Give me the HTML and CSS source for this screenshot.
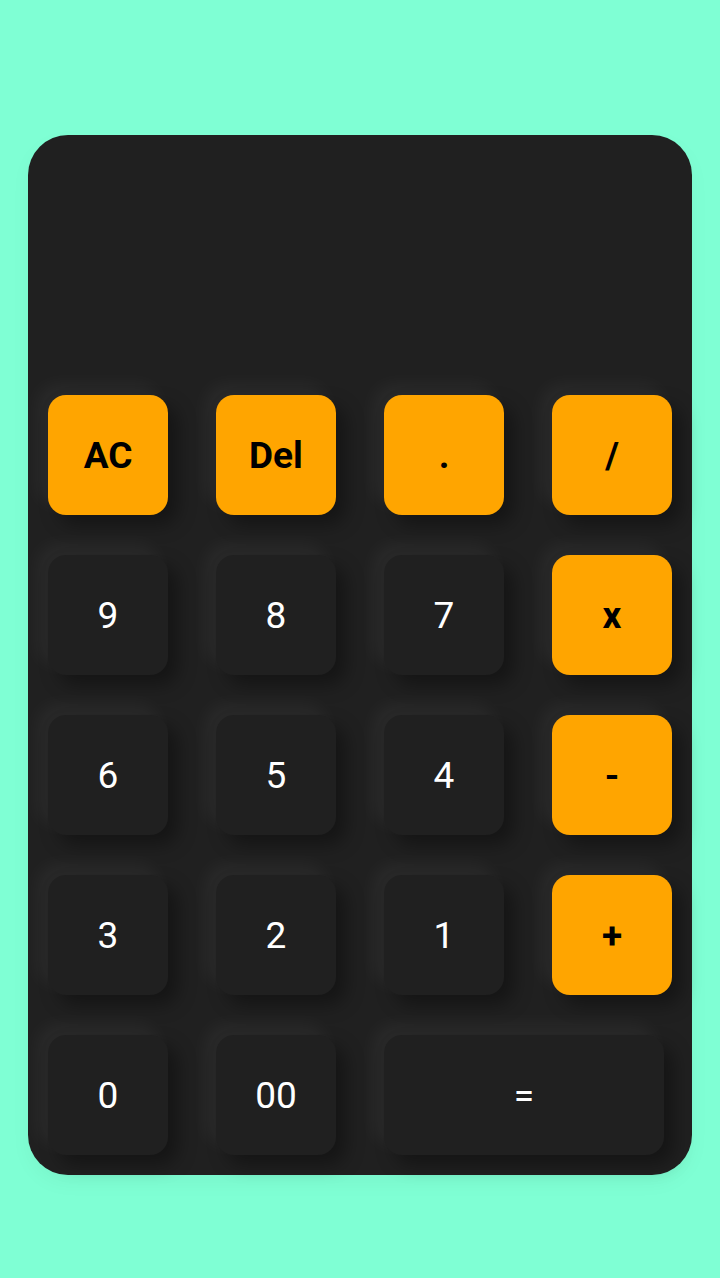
FILE: index.html
```html
<!DOCTYPE html>
<html lang="en">
<head>
  <meta charset="UTF-8" />
  <meta name="viewport" content="width=device-width, initial-scale=1.0" />
  <title>Calculator</title>
  <link rel="stylesheet" href="styles.css">
</head>
<body>
  <div class="calculator">
    <input type="text" class="display" id="display" readonly />
    <div class="keys">
      <button class="op">AC</button>
      <button class="op">Del</button>
      <button class="op">.</button>
      <button class="op">/</button>
      <button>9</button>
      <button>8</button>
      <button>7</button>
      <button class="op">x</button>
      <button>6</button>
      <button>5</button>
      <button>4</button>
      <button class="op">-</button>
      <button>3</button>
      <button>2</button>
      <button>1</button>
      <button class="op">+</button>
      <button>0</button>
      <button>00</button>
      <button class="equal">=</button>
    </div>
  </div>
</body>
</html>
```

FILE: styles.css
```css
* {
  box-sizing: border-box;
}
body {
  margin: 0;
  background-color: #7fffd4;
  font-family: Roboto, "Noto Sans", sans-serif;
  padding: 135px 28px;
}
.calculator {
  background-color: #202020;
  border-radius: 40px;
  padding: 20px;
  box-shadow: 0 8px 20px rgba(0, 0, 0, 0.04);
}
.display {
  display: block;
  width: 100%;
  height: 240px;
  border: none;
  outline: none;
  background: transparent;
  color: white;
  font-size: 48px;
  text-align: right;
}
.keys {
  display: grid;
  grid-template-columns: repeat(4, 120px);
  column-gap: 48px;
  row-gap: 40px;
}
.keys button {
  width: 120px;
  height: 120px;
  border: none;
  border-radius: 18px;
  background-color: #202020;
  color: white;
  font-family: Roboto, "Noto Sans", sans-serif;
  font-size: 37px;
  cursor: pointer;
  box-shadow: -10px -10px 20px rgba(255, 255, 255, 0.05), 10px 10px 18px rgba(0, 0, 0, 0.35);
}
.keys button.op {
  background-color: #ffa500;
  color: black;
  font-weight: bold;
}
.keys button.equal {
  grid-column: span 2;
  width: 280px;
}
```
